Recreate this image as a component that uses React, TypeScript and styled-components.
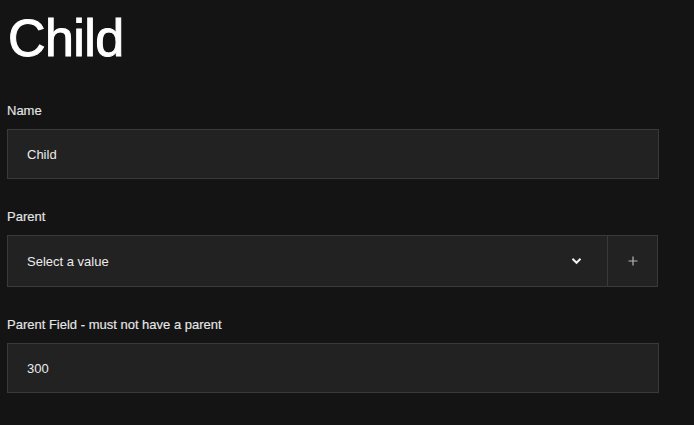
import React from "react";
import styled, { createGlobalStyle } from "styled-components";

const Global = createGlobalStyle`
  html, body { margin: 0; padding: 0; background: #141414; }
  body { font-family: "Liberation Sans", Arial, sans-serif; color: #f2f2f2; }
  * { box-sizing: border-box; }
`;

const Page = styled.div`
  padding: 8px 35px 20px 7px;
  display: flex;
  flex-direction: column;
`;

const Title = styled.h1`
  margin: 0 0 35px 1px;
  font-size: 52px;
  line-height: 60px;
  font-weight: 400;
  color: #ffffff;
  letter-spacing: -0.6px;
  -webkit-text-stroke: 1px #ffffff;
`;

const Group = styled.div<{ $last?: boolean }>`
  display: flex;
  flex-direction: column;
  gap: 10px;
  margin-bottom: ${(p) => (p.$last ? 0 : 30)}px;
`;

const Label = styled.label`
  font-size: 13px;
  line-height: 16px;
  color: #e6e6e6;
  -webkit-text-stroke: 0.15px #e6e6e6;
`;

const Input = styled.input`
  width: 652px;
  height: 50px;
  background: #222222;
  border: 1px solid #3a3a3a;
  padding: 0 19px;
  font-family: "Liberation Sans", Arial, sans-serif;
  font-size: 13px;
  color: #ececec;
  outline: none;
`;

const SelectRow = styled.div`
  display: flex;
  width: 651px;
  height: 52px;
  background: #222222;
  border: 1px solid #3a3a3a;
`;

const SelectField = styled.div`
  flex: 1;
  display: flex;
  align-items: center;
  justify-content: space-between;
  padding: 0 26px 0 19px;
  font-size: 13px;
  color: #ececec;
`;

const AddButton = styled.div`
  width: 50px;
  border-left: 1px solid #3a3a3a;
  display: flex;
  align-items: center;
  justify-content: center;
`;

export default function App() {
  return (
    <>
      <Global />
      <Page>
        <Title>Child</Title>
        <Group>
          <Label>Name</Label>
          <Input defaultValue="Child" />
        </Group>
        <Group>
          <Label>Parent</Label>
          <SelectRow>
            <SelectField>
              <span>Select a value</span>
              <svg width="9" height="7" viewBox="0 0 9 7">
                <path d="M1.2 1.5 L4.5 4.8 L7.8 1.5" stroke="#f0f0f0" strokeWidth="2" fill="none" strokeLinecap="square" />
              </svg>
            </SelectField>
            <AddButton>
              <svg width="10" height="10" viewBox="0 0 10 10">
                <path d="M5 0.5 V9.5 M0.5 5 H9.5" stroke="#b5b5b5" strokeWidth="1.2" fill="none" />
              </svg>
            </AddButton>
          </SelectRow>
        </Group>
        <Group $last>
          <Label>Parent Field - must not have a parent</Label>
          <Input defaultValue="300" />
        </Group>
      </Page>
    </>
  );
}
